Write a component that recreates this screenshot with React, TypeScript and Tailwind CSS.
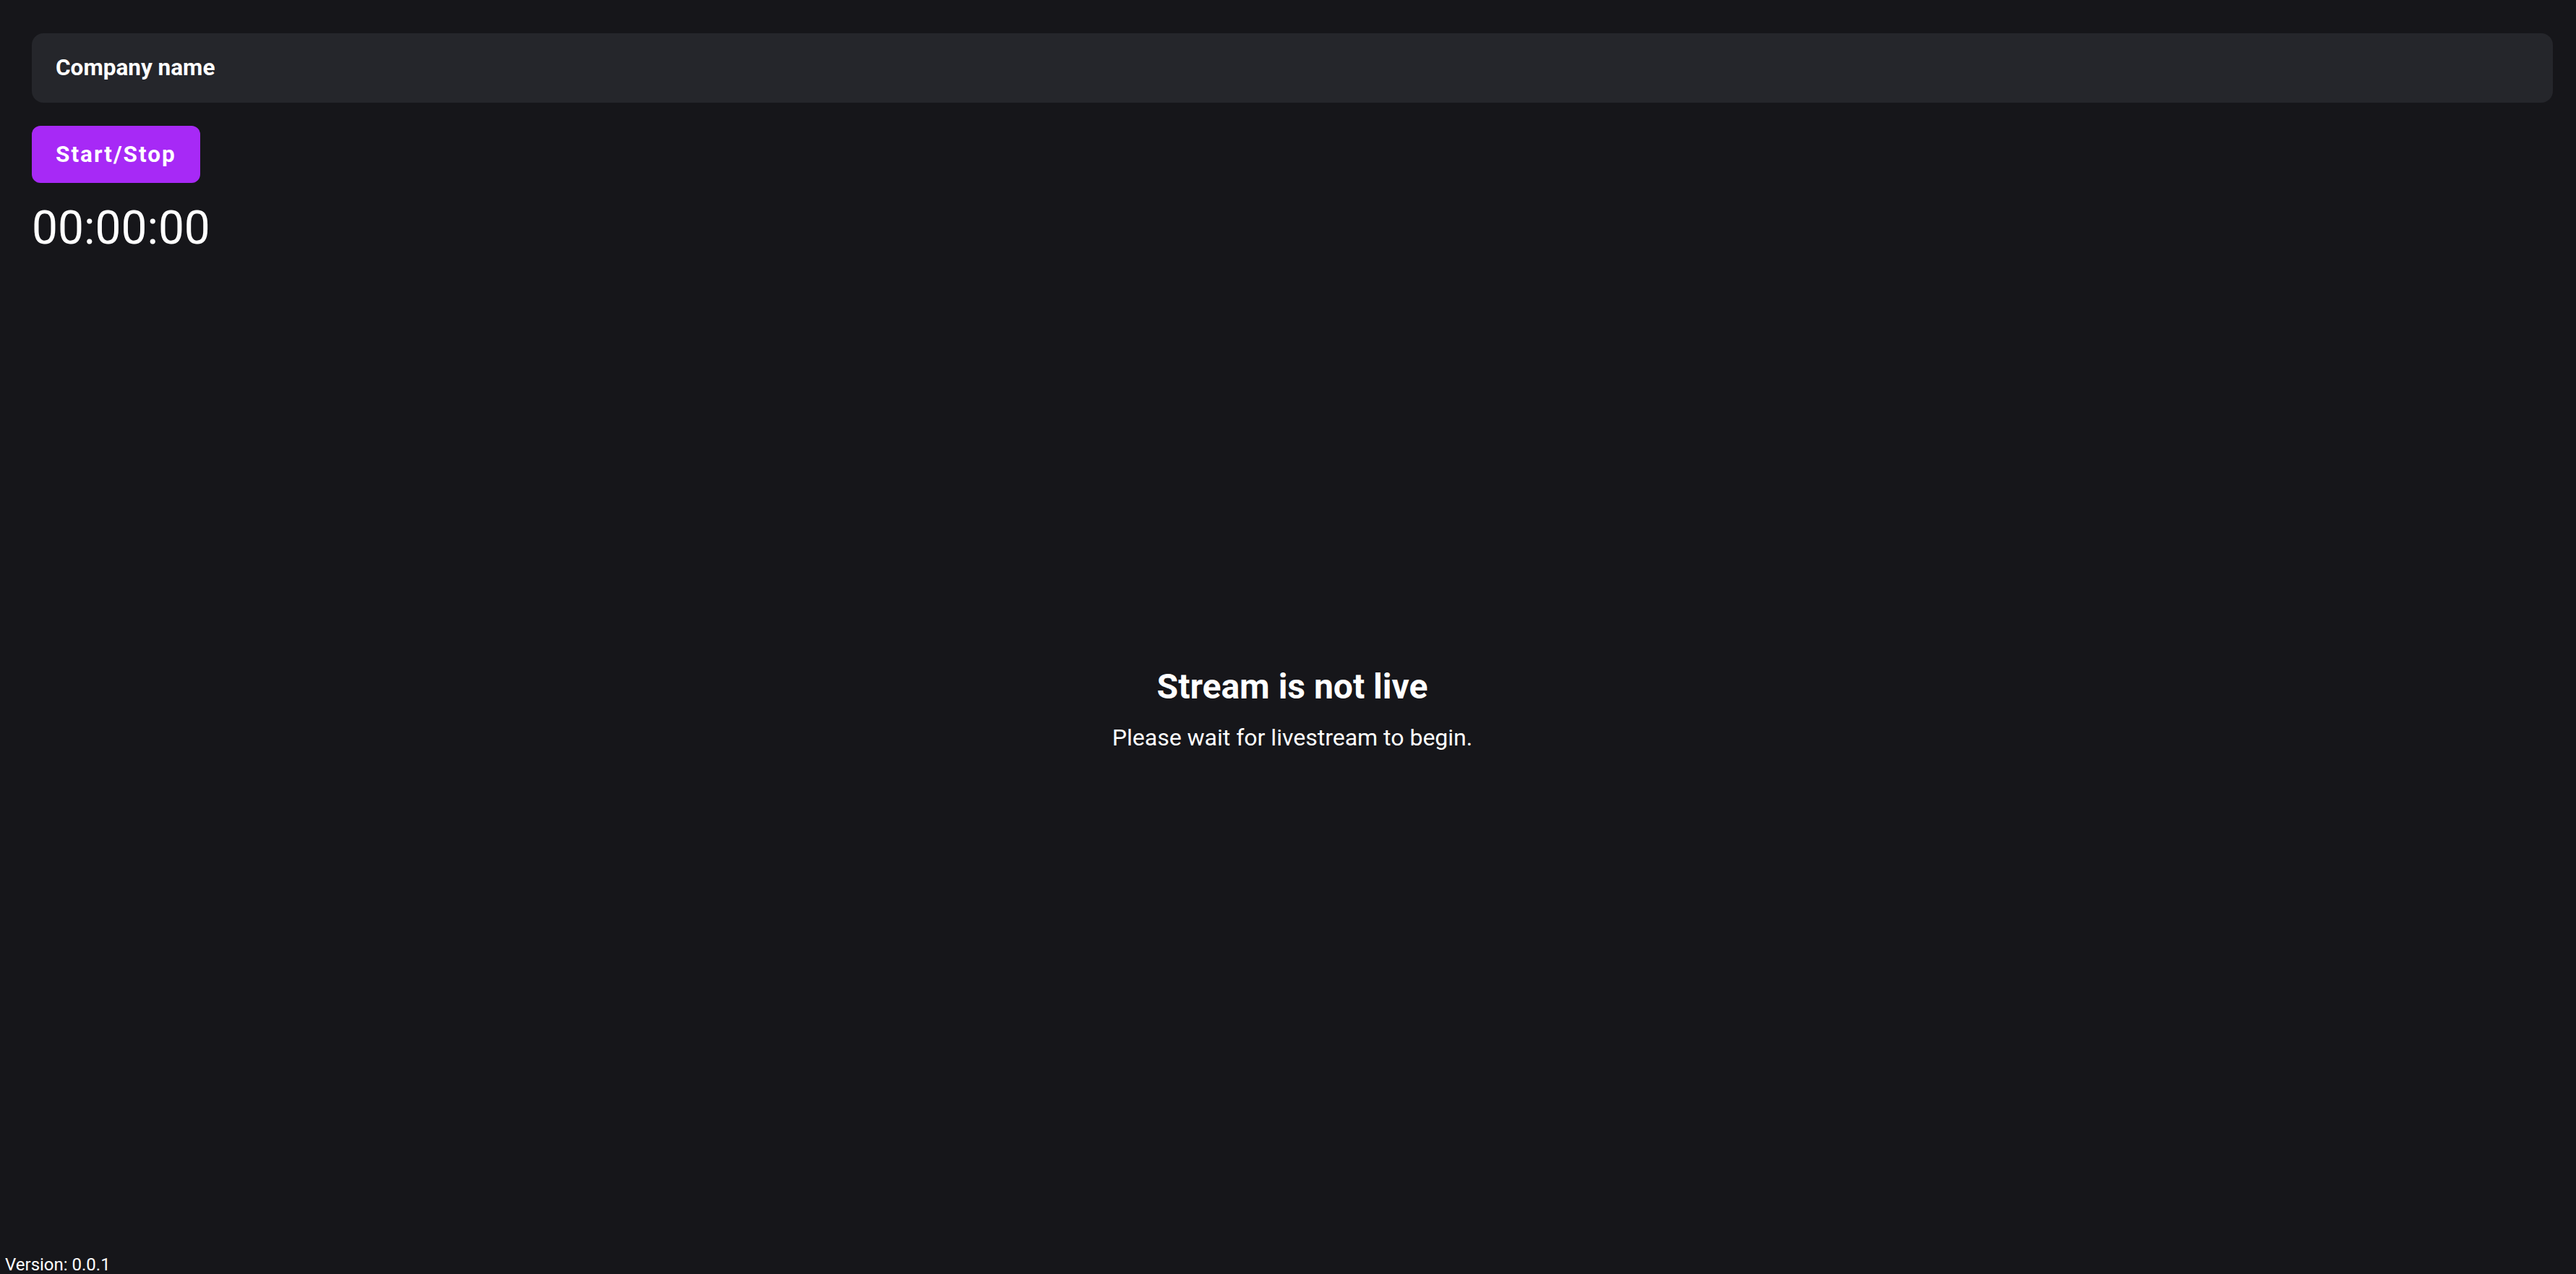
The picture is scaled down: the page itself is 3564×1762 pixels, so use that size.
import React from "react";

export default function App() {
  return (
    <div
      className="relative min-h-screen w-full bg-[#16161a] text-white"
      style={{ fontFamily: "Roboto, 'Noto Sans', sans-serif" }}
    >
      <div className="flex flex-col pl-[44px] pr-[32px] pt-[46px]">
        <div className="flex h-[96px] items-center rounded-[16px] bg-[#25262b] px-[33px]">
          <span className="text-[31.5px] font-bold leading-none">Company name</span>
        </div>
        <div className="mt-[32px] flex">
          <button className="flex h-[79px] items-center rounded-[12px] bg-[#a729f6] px-[33px] text-[31.5px] font-bold leading-none tracking-[2px] text-white">
            Start/Stop
          </button>
        </div>
        <div className="mt-[25px] text-[64px] font-normal leading-[75px]">00:00:00</div>
        <div className="mt-[568px] flex flex-col items-center">
          <h1 className="text-[48px] font-bold leading-[58px]">Stream is not live</h1>
          <p className="mt-[21px] text-[32px] font-normal leading-[40px]">
            Please wait for livestream to begin.
          </p>
        </div>
      </div>
      <div className="absolute bottom-0 left-[7px] text-[24px] leading-[25px] text-white">
        Version: 0.0.1
      </div>
    </div>
  );
}
